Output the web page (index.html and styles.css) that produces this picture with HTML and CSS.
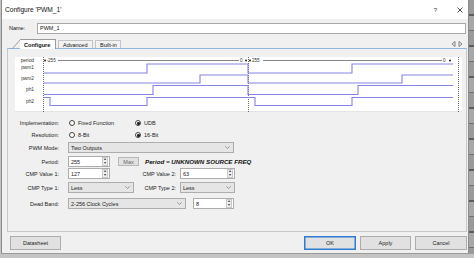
FILE: index.html
```html
<!DOCTYPE html>
<html>
<head>
<meta charset="utf-8">
<link rel="stylesheet" href="styles.css">
</head>
<body>
<div class="screen">
  <div class="dialog">
    <div class="titlebar">
      <span class="title">Configure 'PWM_1'</span>
      <span class="help">?</span>
      <svg class="close" width="6" height="6" viewBox="0 0 6 6"><path d="M0.5 0.5 L5.5 5.5 M5.5 0.5 L0.5 5.5" stroke="#222" stroke-width="0.8"/></svg>
    </div>
    <div class="body">
      <div class="name-row">
        <span class="name-label">Name:</span>
        <div class="name-input">PWM_1</div>
      </div>
      <div class="tabs">
        <svg class="slant" width="9" height="10" viewBox="0 0 9 10"><path d="M0 10 L8.5 0.5" stroke="#8a8a8a" stroke-width="0.8" fill="none"/></svg>
        <div class="tab active">Configure</div>
        <div class="tab t-adv">Advanced</div>
        <div class="tab t-built">Built-in</div>
        <div class="tab-arrows">
          <svg width="12" height="6" viewBox="0 0 12 6"><path d="M4 0.5 L1 3 L4 5.5 Z" fill="none" stroke="#555" stroke-width="0.7"/><path d="M8 0.5 L11 3 L8 5.5 Z" fill="none" stroke="#555" stroke-width="0.7"/></svg>
        </div>
      </div>
      <div class="panel">
        <div class="wave">
          <svg width="447" height="55" viewBox="0 0 447 55">
            <g transform="translate(-15 -57)">
              <g font-size="4.8" fill="#333" text-anchor="end" font-family="Liberation Sans, sans-serif">
                <text x="34" y="62">period</text>
                <text x="34" y="69">pwm1</text>
                <text x="34" y="80">pwm2</text>
                <text x="34" y="91">ph1</text>
                <text x="34" y="103">ph2</text>
              </g>
              <g stroke="#444" stroke-width="0.8" stroke-dasharray="1 1">
                <line x1="43.5" y1="57" x2="43.5" y2="112"/>
                <line x1="248.5" y1="57" x2="248.5" y2="112"/>
                <line x1="458.5" y1="57" x2="458.5" y2="112"/>
              </g>
              <g stroke="#666" stroke-width="0.8">
                <line x1="58" y1="60.5" x2="239" y2="60.5"/>
                <line x1="263" y1="60.5" x2="442" y2="60.5"/>
              </g>
              <g fill="#222">
                <circle cx="45" cy="60.5" r="1"/>
                <circle cx="246" cy="60.5" r="1"/>
                <circle cx="250" cy="60.5" r="1"/>
                <circle cx="450" cy="60.5" r="1"/>
              </g>
              <g font-size="4.6" fill="#333" font-family="Liberation Sans, sans-serif">
                <text x="46.5" y="62.2">-255</text>
                <text x="240" y="62.2">0</text>
                <text x="252" y="62.2">255</text>
                <text x="443" y="62.2">0</text>
              </g>
              <g fill="none" stroke="#8484e6" stroke-width="1.1">
                <path d="M44 73 H147 V64 H248 V73 H352 V64 H453"/>
                <path d="M44 83 H200 V75 H248 V83 H402 V75 H453"/>
                <path d="M44 94.5 H153 V85.5 H248 V94.5 H358 V85.5 H453"/>
                <path d="M44 97.5 H50 V105.5 H147 V97.5 H255 V105.5 H352 V97.5 H453"/>
              </g>
            </g>
          </svg>
        </div>
        <div class="form">
          <div class="row r1">
            <span class="lbl">Implementation:</span>
            <span class="radio"><i class="dot"></i>Fixed Function</span>
            <span class="radio"><i class="dot on"></i>UDB</span>
          </div>
          <div class="row r2">
            <span class="lbl">Resolution:</span>
            <span class="radio"><i class="dot"></i>8-Bit</span>
            <span class="radio"><i class="dot on"></i>16-Bit</span>
          </div>
          <div class="row r3">
            <span class="lbl">PWM Mode:</span>
            <div class="select w-mode"><span>Two Outputs</span><svg width="5" height="3" viewBox="0 0 5 3"><path d="M0.3 0.3 L2.5 2.5 L4.7 0.3" fill="none" stroke="#666" stroke-width="0.6"/></svg></div>
          </div>
          <div class="row r4">
            <span class="lbl">Period:</span>
            <div class="spin w-small"><span>255</span><i class="spinbtn"><b>▴</b><b>▾</b></i></div>
            <div class="maxbtn">Max</div>
            <span class="freq">Period = UNKNOWN SOURCE FREQ</span>
          </div>
          <div class="row r5">
            <span class="lbl">CMP Value 1:</span>
            <div class="spin w-small"><span>127</span><i class="spinbtn"><b>▴</b><b>▾</b></i></div>
            <span class="lbl2 l2a">CMP Value 2:</span>
            <div class="spin w-right"><span>63</span><i class="spinbtn"><b>▴</b><b>▾</b></i></div>
          </div>
          <div class="row r6">
            <span class="lbl">CMP Type 1:</span>
            <div class="select w-type"><span>Less</span><svg width="5" height="3" viewBox="0 0 5 3"><path d="M0.3 0.3 L2.5 2.5 L4.7 0.3" fill="none" stroke="#666" stroke-width="0.6"/></svg></div>
            <span class="lbl2 l2b">CMP Type 2:</span>
            <div class="select w-right"><span>Less</span><svg width="5" height="3" viewBox="0 0 5 3"><path d="M0.3 0.3 L2.5 2.5 L4.7 0.3" fill="none" stroke="#666" stroke-width="0.6"/></svg></div>
          </div>
          <div class="row r7">
            <span class="lbl">Dead Band:</span>
            <div class="select w-dead"><span>2-256 Clock Cycles</span><svg width="5" height="3" viewBox="0 0 5 3"><path d="M0.3 0.3 L2.5 2.5 L4.7 0.3" fill="none" stroke="#666" stroke-width="0.6"/></svg></div>
            <div class="spin w-dspin"><span>8</span><i class="spinbtn"><b>▴</b><b>▾</b></i></div>
          </div>
        </div>
      </div>
      <div class="footer">
        <div class="btn datasheet">Datasheet</div>
        <div class="btn ok">OK</div>
        <div class="btn apply">Apply</div>
        <div class="btn cancel">Cancel</div>
      </div>
    </div>
  </div>
  <div class="strip"></div>
</div>
</body>
</html>
```
FILE: styles.css
```css
* { box-sizing: border-box; }
html, body { margin: 0; padding: 0; }
body {
  width: 474px;
  height: 258px;
  overflow: hidden;
  background: #c4c4c4;
  font-family: "Liberation Sans", Arial, sans-serif;
  font-size: 5.5px;
  color: #111;
}
.screen {
  display: flex;
  height: 254px;
}
.dialog {
  width: 468px;
  height: 254px;
  margin-left: 1px;
  border-left: 1px solid #8c8c8c;
  border-right: 1px solid #8c8c8c;
  border-bottom: 1px solid #9a9a9a;
  background: #f0f0f0;
  display: flex;
  flex-direction: column;
}
.strip {
  flex: 1;
  background: repeating-linear-gradient(180deg, #9a9a9a 0 14px, #5c5c5c 14px 16px, #a8a8a8 16px 30px, #707070 30px 31px);
}
.titlebar {
  height: 19px;
  background: #fff;
  display: flex;
  align-items: center;
  padding-left: 3px;
  flex: none;
}
.title { font-size: 6.6px; color: #111; }
.help { margin-left: auto; font-size: 6px; color: #333; }
.close { margin-left: 20px; margin-right: 5px; }
.body { flex: 1; display: flex; flex-direction: column; }
.name-row {
  margin-top: 3px;
  height: 12px;
  display: flex;
  align-items: center;
}
.name-label { width: 35px; padding-left: 7px; }
.name-input {
  width: 429px;
  height: 11px;
  background: #fff;
  border: 1px solid #a8a8a8;
  padding-left: 2px;
  display: flex;
  align-items: center;
}
.tabs {
  margin-top: 5px;
  height: 9px;
  display: flex;
  align-items: flex-end;
  padding-left: 10px;
  position: relative;
}
.slant { align-self: flex-start; margin-right: -1px; }
.tab {
  height: 8px;
  padding: 0 4px;
  display: flex;
  align-items: center;
  white-space: nowrap;
  border: 1px solid #c4c4c4;
  border-bottom: none;
  background: #f2f2f2;
  margin-right: 2px;
}
.tab.active {
  height: 10px;
  width: 36px;
  font-weight: bold;
  background: #fff;
  border-color: #9a9a9a;
  border-left: none;
  padding-left: 4px;
  margin-bottom: -1px;
  z-index: 1;
  font-size: 5.6px;
}
.t-adv { width: 35px; }
.t-built { width: 26px; }
.tab-arrows { margin-left: auto; margin-right: 5px; align-self: center; display: flex; }
.panel {
  margin-left: 5px;
  width: 460px;
  height: 184px;
  border: 1px solid #c8c8c8;
  border-top: 1px solid #8fb6dd;
  background: #f0f0f0;
  padding: 8px 0 0 0;
}
.wave {
  margin-left: 7px;
  width: 447px;
  height: 55px;
  background: #fff;
  border-bottom: 1px solid #e4e4e4;
}
.wave svg { display: block; }
.form { margin-top: 5px; display: flex; flex-direction: column; }
.row { display: flex; align-items: center; }
.r1 { height: 12px; }
.r2 { height: 12px; }
.r3 { height: 11px; margin-top: 1px; }
.r4 { height: 11px; margin-top: 3px; }
.r5 { height: 11px; margin-top: 1px; }
.r6 { height: 11px; margin-top: 3px; }
.r7 { height: 11px; margin-top: 5px; }
.lbl { width: 51px; text-align: right; margin-right: 9px; color: #222; }
.radio { display: flex; align-items: center; width: 66px; padding-left: 1px; color: #222; }
.dot {
  width: 6px; height: 6px; border-radius: 50%;
  border: 0.8px solid #444; background: #fff;
  margin-right: 3px; position: relative; display: inline-block;
}
.dot.on::after {
  content: ""; position: absolute; left: 1.2px; top: 1.2px;
  width: 2.4px; height: 2.4px; border-radius: 50%; background: #222;
}
.select {
  height: 11px;
  background: #e5e5e5;
  border: 1px solid #adadad;
  display: flex; align-items: center; justify-content: space-between;
  padding: 0 3px 0 2px;
  color: #222;
}
.spin {
  height: 11px;
  background: #fff;
  border: 1px solid #adadad;
  display: flex; align-items: center; justify-content: space-between;
  padding-left: 2px;
  color: #222;
}
.spinbtn {
  width: 6px; height: 9px;
  margin-right: 1px;
  background: #f0f0f0;
  border: 0.5px solid #c8c8c8;
  display: flex; flex-direction: column; align-items: center; justify-content: center;
  font-style: normal; font-size: 3.5px; line-height: 3.5px; color: #333;
}
.spinbtn b { font-weight: normal; }
.w-mode { width: 166px; }
.w-small { width: 42px; }
.w-type { width: 66px; }
.w-right { width: 55px; }
.w-dead { width: 118px; }
.w-dspin { width: 41px; margin-left: 7px; }
.maxbtn {
  margin-left: 8px;
  width: 21px; height: 9px;
  background: #e1e1e1;
  border: 1px solid #b8b8b8;
  display: flex; align-items: center; justify-content: center;
  color: #666;
}
.freq {
  margin-left: 6px;
  font-weight: bold; font-style: italic;
  font-size: 6.2px; color: #111;
}
.lbl2 { text-align: right; padding-right: 4px; color: #222; }
.l2a { width: 70px; }
.l2b { width: 46px; }
.footer {
  margin-top: 4px;
  display: flex;
  height: 14px;
}
.btn {
  height: 14px;
  background: #e1e1e1;
  border: 1px solid #adadad;
  display: flex; align-items: center; justify-content: center;
  color: #222;
}
.datasheet { margin-left: 8px; width: 51px; }
.ok { margin-left: 243px; width: 52px; border: 1px solid #2f7bd0; box-shadow: inset 0 0 0 0.5px #2f7bd0; }
.apply { margin-left: 4px; width: 51px; }
.cancel { margin-left: 4px; width: 52px; }
```
